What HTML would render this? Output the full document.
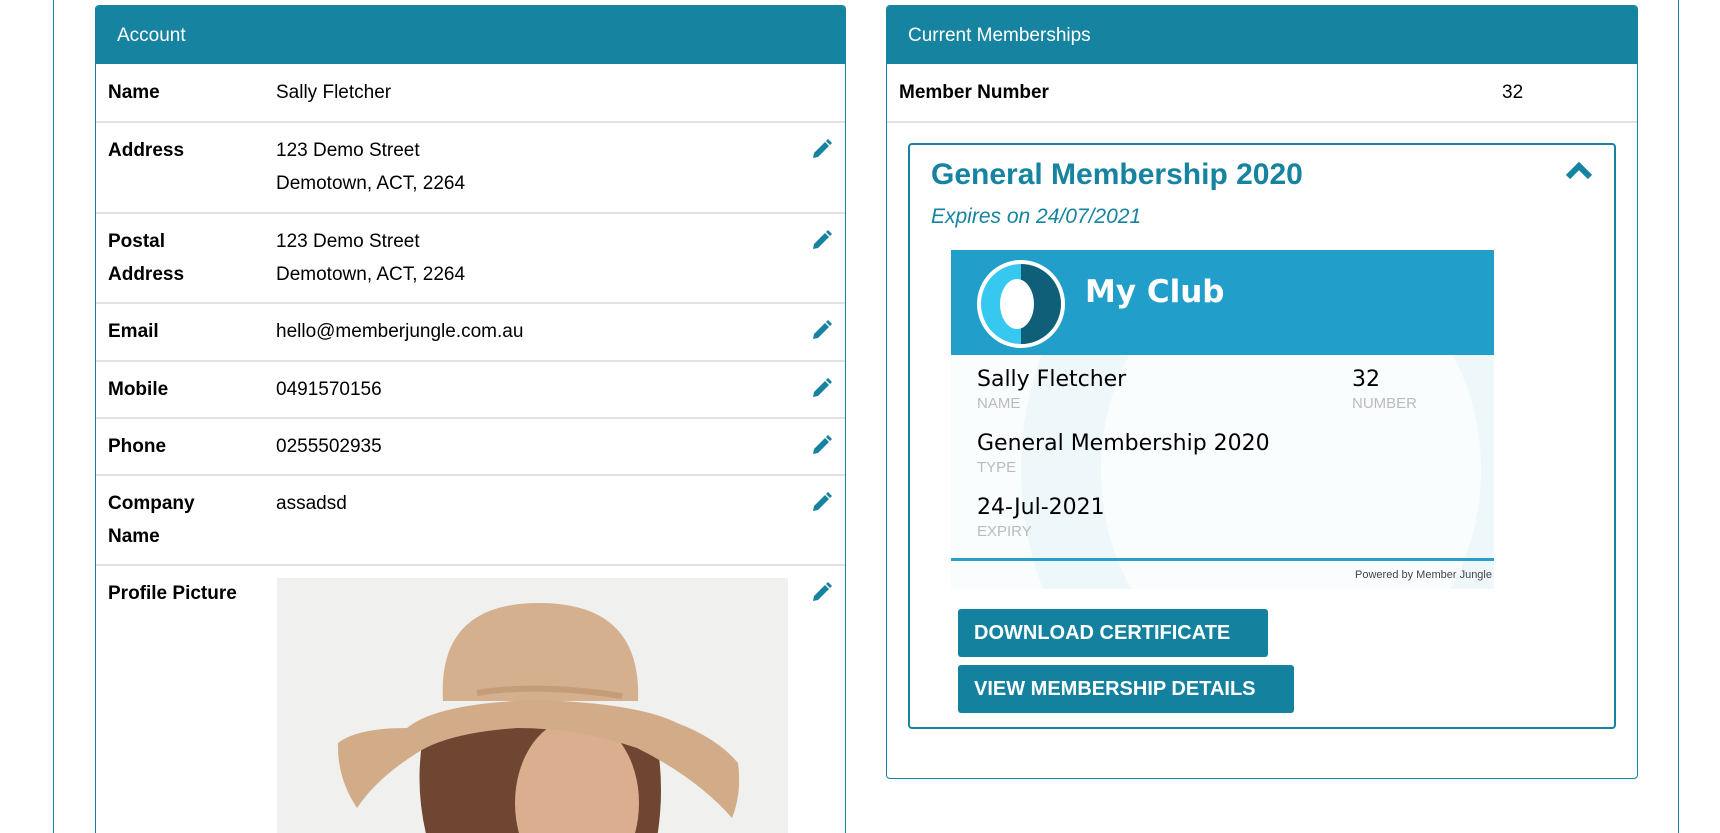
<!DOCTYPE html>
<html><head><meta charset="utf-8"><style>
*{box-sizing:border-box;margin:0;padding:0}
html,body{width:1720px;height:833px;overflow:hidden}
body{background:#fff;font-family:"Liberation Sans",Arial,sans-serif;color:#000;position:relative}
.vl{position:absolute;top:0;height:833px;width:1px;background:#1a86a3}
.panel{position:absolute;border:1px solid #1683a0;border-radius:4px;background:#fff;overflow:hidden}
.hd{background:#1683a0;color:#fff;height:58px;font-size:19px;padding:19px 0 0 21px}
.row{position:absolute;left:0;right:0;border-bottom:2px solid #e2e2e2;font-size:19px;line-height:33px}
.lab{position:absolute;left:12px;top:11px;font-weight:bold}
.val{position:absolute;left:180px;top:11px}
.pen{position:absolute;left:714px;top:16px}
.btn{position:absolute;background:#14819f;color:#fff;font-weight:bold;font-size:20px;border-radius:3px;line-height:48px;padding-left:16px}
</style></head><body>
<div class="vl" style="left:53px"></div>
<div class="vl" style="left:1678px"></div>

<div class="panel" style="left:95px;top:5px;width:751px;height:828px;border-bottom:0;border-radius:4px 4px 0 0">
<div class="hd">Account</div>
<div class="row" style="top:59px;height:58px"><span class="lab">Name</span><span class="val">Sally Fletcher</span></div>
<div class="row" style="top:117px;height:91px"><span class="lab">Address</span><span class="val">123 Demo Street<br>Demotown, ACT, 2264</span><svg class="pen" width="22" height="22" viewBox="0 0 22 22"><path d="M3 19l1-5L15 3l4 4L8 18z M16 2l2-2 4 4-2 2z" fill="#1683a0"/></svg></div>
<div class="row" style="top:208px;height:90px"><span class="lab">Postal<br>Address</span><span class="val">123 Demo Street<br>Demotown, ACT, 2264</span><svg class="pen" width="22" height="22" viewBox="0 0 22 22"><path d="M3 19l1-5L15 3l4 4L8 18z M16 2l2-2 4 4-2 2z" fill="#1683a0"/></svg></div>
<div class="row" style="top:298px;height:58px"><span class="lab">Email</span><span class="val">hello@memberjungle.com.au</span><svg class="pen" width="22" height="22" viewBox="0 0 22 22"><path d="M3 19l1-5L15 3l4 4L8 18z M16 2l2-2 4 4-2 2z" fill="#1683a0"/></svg></div>
<div class="row" style="top:356px;height:57px"><span class="lab">Mobile</span><span class="val">0491570156</span><svg class="pen" width="22" height="22" viewBox="0 0 22 22"><path d="M3 19l1-5L15 3l4 4L8 18z M16 2l2-2 4 4-2 2z" fill="#1683a0"/></svg></div>
<div class="row" style="top:413px;height:57px"><span class="lab">Phone</span><span class="val">0255502935</span><svg class="pen" width="22" height="22" viewBox="0 0 22 22"><path d="M3 19l1-5L15 3l4 4L8 18z M16 2l2-2 4 4-2 2z" fill="#1683a0"/></svg></div>
<div class="row" style="top:470px;height:90px"><span class="lab">Company<br>Name</span><span class="val">assadsd</span><svg class="pen" width="22" height="22" viewBox="0 0 22 22"><path d="M3 19l1-5L15 3l4 4L8 18z M16 2l2-2 4 4-2 2z" fill="#1683a0"/></svg></div>
<div class="row" style="top:560px;height:268px;border:0"><span class="lab">Profile Picture</span><svg class="pen" width="22" height="22" viewBox="0 0 22 22"><path d="M3 19l1-5L15 3l4 4L8 18z M16 2l2-2 4 4-2 2z" fill="#1683a0"/></svg>
<svg style="position:absolute;left:181px;top:12px" width="511" height="260" viewBox="0 0 511 260">
<rect width="511" height="260" fill="#f0f0ee"/>
<path d="M150 140 Q135 200 150 260 L380 260 Q390 200 375 140 Q300 110 150 140z" fill="#6e4632"/>
<ellipse cx="300" cy="225" rx="62" ry="85" fill="#dcae90"/>
<path d="M166 123 Q160 25 262 25 Q365 25 361 123z" fill="#d5b08e"/>
<path d="M61 165 Q80 150 130 150 Q160 125 260 122 Q360 125 400 145 Q440 160 461 185 Q465 215 455 240 Q420 200 360 170 Q300 150 240 150 Q170 155 140 175 Q100 200 80 230 Q60 200 61 165z" fill="#d2ac88"/>
<path d="M200 115 Q260 105 345 118" stroke="#c49c78" stroke-width="6" fill="none"/>
</svg></div>
</div>

<div class="panel" style="left:886px;top:5px;width:752px;height:774px">
<div class="hd">Current Memberships</div>
<div class="row" style="top:59px;height:58px"><span class="lab" style="left:12px">Member Number</span><span class="val" style="left:615px">32</span></div>
<div style="position:absolute;left:21px;top:137px;width:708px;height:586px;border:2px solid #1683a0;border-radius:4px">
<div style="position:absolute;left:21px;top:13px;font-size:30px;font-weight:bold;color:#1683a0">General Membership 2020</div>
<div style="position:absolute;left:21px;top:60px;font-size:21px;font-style:italic;color:#1683a0">Expires on 24/07/2021</div>
<svg style="position:absolute;left:655px;top:16px" width="28" height="20" viewBox="0 0 28 20"><path d="M3 16L14 5l11 11" stroke="#1683a0" stroke-width="6" fill="none"/></svg>
<div style="position:absolute;left:41px;top:105px;width:543px;height:339px;background:#fafdfe;overflow:hidden">
<svg style="position:absolute;left:0;top:0" width="543" height="339"><ellipse cx="340" cy="220" rx="230" ry="260" fill="none" stroke="#eef7fa" stroke-width="80"/></svg>
<div style="position:absolute;left:0;top:0;width:543px;height:105px;background:#229ecb"></div>
<svg style="position:absolute;left:24px;top:8px" width="92" height="92" viewBox="0 0 92 92"><circle cx="46" cy="46" r="44" fill="#fff"/><circle cx="46" cy="46" r="40" fill="#36c8ef"/><path d="M46 6a40 40 0 0 1 0 80z" fill="#0f5f78"/><ellipse cx="42" cy="46" rx="17" ry="25" fill="#fff"/></svg>
<div style="position:absolute;left:134px;top:24px;font-size:31px;font-weight:bold;color:#fff;font-family:'DejaVu Sans',sans-serif">My Club</div>
<div style="position:absolute;left:26px;top:117px;font-size:22px;font-family:'DejaVu Sans',sans-serif">Sally Fletcher</div>
<div style="position:absolute;left:26px;top:145px;font-size:15px;color:#bbb">NAME</div>
<div style="position:absolute;left:401px;top:117px;font-size:22px;font-family:'DejaVu Sans',sans-serif">32</div>
<div style="position:absolute;left:401px;top:145px;font-size:15px;color:#bbb">NUMBER</div>
<div style="position:absolute;left:26px;top:181px;font-size:22px;font-family:'DejaVu Sans',sans-serif">General Membership 2020</div>
<div style="position:absolute;left:26px;top:209px;font-size:15px;color:#bbb">TYPE</div>
<div style="position:absolute;left:26px;top:245px;font-size:22px;font-family:'DejaVu Sans',sans-serif">24-Jul-2021</div>
<div style="position:absolute;left:26px;top:273px;font-size:15px;color:#bbb">EXPIRY</div>
<div style="position:absolute;left:0;top:308px;width:543px;height:3px;background:#2a9fcc"></div>
<div style="position:absolute;right:2px;top:319px;font-size:11px;color:#444">Powered by Member Jungle</div>
</div>
<div class="btn" style="left:48px;top:464px;width:310px;height:48px">DOWNLOAD CERTIFICATE</div>
<div class="btn" style="left:48px;top:520px;width:336px;height:48px">VIEW MEMBERSHIP DETAILS</div>
</div>
</div>
</body></html>
